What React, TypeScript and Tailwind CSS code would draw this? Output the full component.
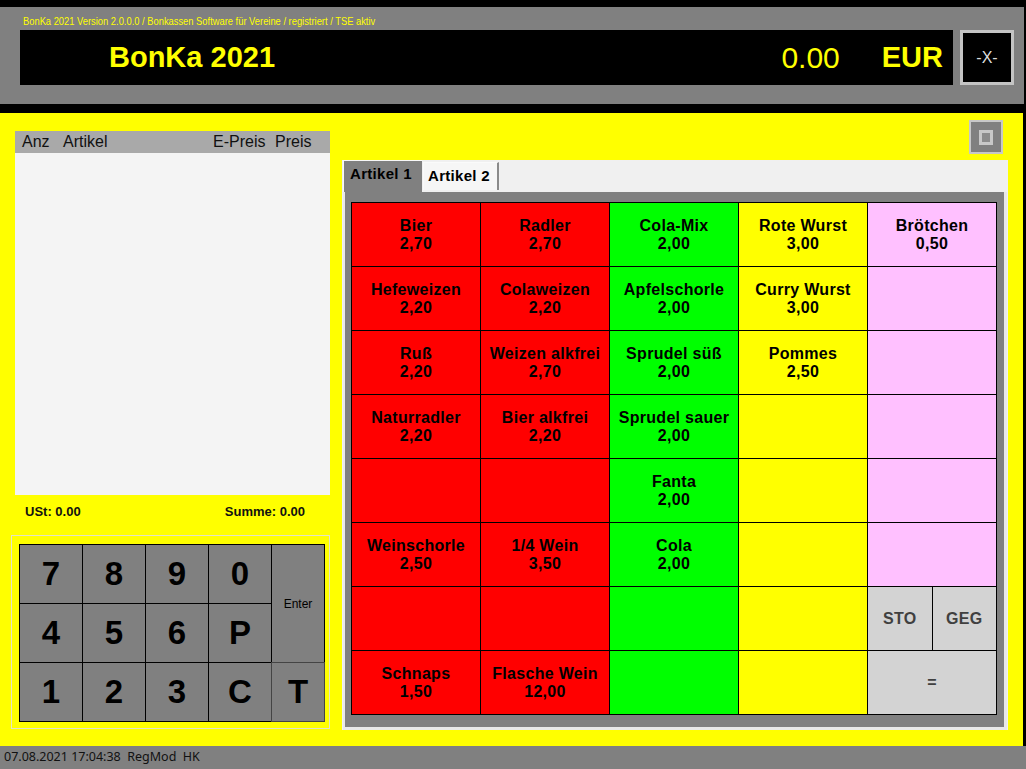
import React from "react";

type Item = { name?: string; price?: string; color: string };

var RED = "bg-[#ff0000]";
var GREEN = "bg-[#00ff00]";
var YELLOW = "bg-[#ffff00]";
var PINK = "bg-[#ffc0ff]";

// article buttons, column by column per row
var rows: Item[][] = [
  [
    { name: "Bier", price: "2,70", color: RED },
    { name: "Radler", price: "2,70", color: RED },
    { name: "Cola-Mix", price: "2,00", color: GREEN },
    { name: "Rote Wurst", price: "3,00", color: YELLOW },
    { name: "Brötchen", price: "0,50", color: PINK },
  ],
  [
    { name: "Hefeweizen", price: "2,20", color: RED },
    { name: "Colaweizen", price: "2,20", color: RED },
    { name: "Apfelschorle", price: "2,00", color: GREEN },
    { name: "Curry Wurst", price: "3,00", color: YELLOW },
    { color: PINK },
  ],
  [
    { name: "Ruß", price: "2,20", color: RED },
    { name: "Weizen alkfrei", price: "2,70", color: RED },
    { name: "Sprudel süß", price: "2,00", color: GREEN },
    { name: "Pommes", price: "2,50", color: YELLOW },
    { color: PINK },
  ],
  [
    { name: "Naturradler", price: "2,20", color: RED },
    { name: "Bier alkfrei", price: "2,20", color: RED },
    { name: "Sprudel sauer", price: "2,00", color: GREEN },
    { color: YELLOW },
    { color: PINK },
  ],
  [
    { color: RED },
    { color: RED },
    { name: "Fanta", price: "2,00", color: GREEN },
    { color: YELLOW },
    { color: PINK },
  ],
  [
    { name: "Weinschorle", price: "2,50", color: RED },
    { name: "1/4 Wein", price: "3,50", color: RED },
    { name: "Cola", price: "2,00", color: GREEN },
    { color: YELLOW },
    { color: PINK },
  ],
  [{ color: RED }, { color: RED }, { color: GREEN }, { color: YELLOW }],
  [
    { name: "Schnaps", price: "1,50", color: RED },
    { name: "Flasche Wein", price: "12,00", color: RED },
    { color: GREEN },
    { color: YELLOW },
  ],
];

function ArticleCell({ item }: { item: Item }) {
  return (
    <div
      className={`${item.color} flex flex-col items-center justify-center text-[16px] font-bold leading-[18px] tracking-[0.3px] text-black`}
    >
      {item.name && <span>{item.name}</span>}
      {item.price && <span>{item.price}</span>}
    </div>
  );
}

function GrayKey({ label }: { label: string }) {
  return (
    <div className="flex items-center justify-center bg-[#d3d3d3] text-[16px] font-bold tracking-[0.3px] text-[#404040]">
      {label}
    </div>
  );
}

function NumKey({ label, className = "" }: { label: string; className?: string }) {
  return (
    <div
      className={`flex items-center justify-center bg-[#808080] text-[33px] font-bold text-black ${className}`}
    >
      {label}
    </div>
  );
}

export default function App() {
  return (
    <div
      className="flex h-[769px] w-[1026px] flex-col overflow-hidden bg-black pt-[7px]"
      style={{ fontFamily: '"Liberation Sans", Arial, sans-serif' }}
    >
      {/* title band */}
      <div className="h-[97px] w-[1024px] shrink-0 bg-[#808080] pl-[20px] pt-[7px]">
        <div className="ml-[3px] h-[14px] origin-left scale-x-[0.85] whitespace-nowrap text-[11px] leading-[14px] text-[#ffff00]">
          BonKa 2021 Version 2.0.0.0 / Bonkassen Software für Vereine / registriert / TSE aktiv
        </div>
        <div className="mt-[2px] flex h-[55px] items-center gap-[7px]">
          <div className="flex h-full w-[933px] items-center bg-black pl-[89px] pr-[10px] text-[#ffff00]">
            <span className="text-[29px] font-bold">BonKa 2021</span>
            <span className="ml-auto text-[30px]">0.00</span>
            <span className="ml-[42px] text-[29px] font-bold">EUR</span>
          </div>
          <div className="flex h-full w-[54px] items-center justify-center border-[3px] border-[#c4c4c4] bg-black text-[16px] text-[#dcdcdc]">
            -X-
          </div>
        </div>
      </div>

      {/* main area */}
      <div className="mt-[9px] flex h-[633px] w-[1023px] shrink-0 bg-[#ffff00]">
        {/* receipt + keypad */}
        <div className="flex w-[342px] shrink-0 flex-col pl-[11px] pt-[18px]">
          <div className="ml-[4px] w-[315px]">
            <div className="flex h-[22px] items-center bg-[#a9a9a9] pl-[7px] text-[16px] text-[#111]">
              <span className="w-[41px]">Anz</span>
              <span className="flex-1">Artikel</span>
              <span className="w-[62px]">E-Preis</span>
              <span className="w-[55px]">Preis</span>
            </div>
            <div className="h-[342px] bg-[#f4f4f4]" />
            <div className="flex h-[34px] items-center justify-between pl-[10px] pr-[25px] text-[13px] font-bold text-[#111]">
              <span>USt: 0.00</span>
              <span>Summe: 0.00</span>
            </div>
          </div>
          <div className="mt-[6px] h-[194px] w-[319px] border border-[#e2e2c8] pl-[7px] pt-[8px]">
            <div className="grid w-[306px] grid-cols-[62px_62px_62px_62px_52px] grid-rows-[58px_58px_58px] gap-px bg-black p-px">
              <NumKey label="7" />
              <NumKey label="8" />
              <NumKey label="9" />
              <NumKey label="0" />
              <div className="row-span-2 flex items-center justify-center bg-[#808080] text-[12px] text-black">
                Enter
              </div>
              <NumKey label="4" />
              <NumKey label="5" />
              <NumKey label="6" />
              <NumKey label="P" />
              <NumKey label="1" />
              <NumKey label="2" />
              <NumKey label="3" />
              <NumKey label="C" />
              <NumKey label="T" className="outline outline-1 outline-[#444]" />
            </div>
          </div>
        </div>

        {/* article pages */}
        <div className="flex w-[666px] shrink-0 flex-col pt-[7px]">
          <div className="flex h-[40px] justify-end pr-[5px]">
            <div className="flex h-[34px] w-[34px] items-center justify-center border-2 border-[#c8c8c8] bg-[#808080]">
              <div className="h-[15px] w-[14px] border-[3px] border-[#c8c8c8] bg-[#8c8c8c]" />
            </div>
          </div>
          <div className="flex h-[570px] flex-col bg-[#f0f0f0]">
            <div className="flex h-[32px] items-end pl-[1px]">
              <div className="flex h-[32px] w-[79px] items-start border-l border-t border-[#f8f8f8] bg-[#808080] pl-[6px] pt-[2px] text-[15px] font-bold tracking-[0.3px] text-black">
                Artikel 1
              </div>
              <div className="mb-[2px] ml-[1px] flex h-[28px] w-[76px] items-center border-l border-r-2 border-t border-l-[#fafafa] border-r-[#8a8a8a] border-t-[#fafafa] bg-[#f6f6f6] pl-[4px] text-[15px] font-bold tracking-[0.3px] text-black">
                Artikel 2
              </div>
            </div>
            <div className="ml-[1px] h-[538px] w-[664px] border-b-[3px] border-l-[2px] border-r-[3px] border-[#e8e8e8] bg-[#808080] pl-[6px] pt-[10px]">
              <div className="grid w-[646px] grid-cols-[repeat(5,128px)] grid-rows-[repeat(8,63px)] gap-px bg-black p-px">
                {rows.map((row, r) =>
                  row.map((item, c) => <ArticleCell key={`${r}-${c}`} item={item} />)
                )}
                {/* row 7, last column: storno / gegeben */}
                <div className="col-start-5 row-start-7 grid grid-cols-2 gap-px bg-black">
                  <GrayKey label="STO" />
                  <GrayKey label="GEG" />
                </div>
                <div className="col-start-5 row-start-8 grid">
                  <GrayKey label="=" />
                </div>
              </div>
            </div>
          </div>
        </div>
      </div>

      {/* status bar */}
      <div
        className="flex h-[23px] w-full shrink-0 items-center bg-[#808080] pl-[4px] text-[12.5px] text-[#111]"
        style={{ fontFamily: '"Noto Sans", sans-serif' }}
      >
        <span className="whitespace-pre">07.08.2021 17:04:38  RegMod  HK</span>
      </div>
    </div>
  );
}
